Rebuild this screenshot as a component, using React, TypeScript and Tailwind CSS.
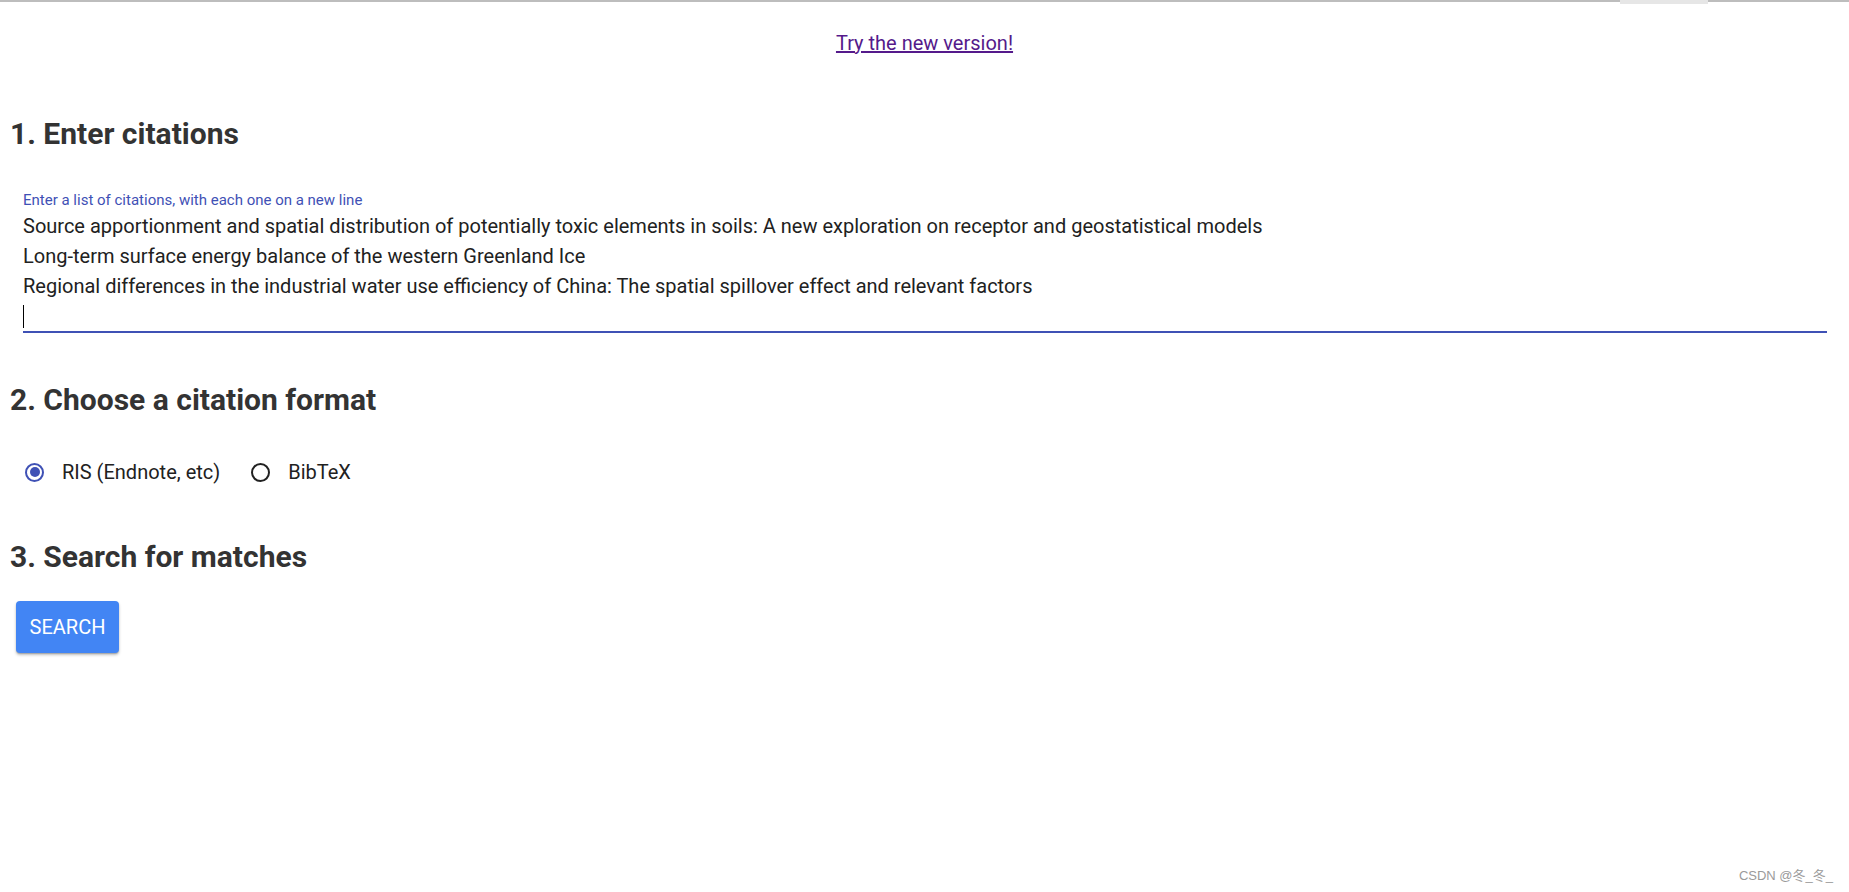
import { useState } from "react";

const citations = [
  "Source apportionment and spatial distribution of potentially toxic elements in soils: A new exploration on receptor and geostatistical models",
  "Long-term surface energy balance of the western Greenland Ice",
  "Regional differences in the industrial water use efficiency of China: The spatial spillover effect and relevant factors",
];

function Radio({ checked, label, onClick }: { checked: boolean; label: string; onClick: () => void }) {
  return (
    <button type="button" onClick={onClick} className="flex items-center gap-[18px] cursor-pointer">
      <span
        className={
          checked
            ? "flex h-[19px] w-[19px] items-center justify-center rounded-full border-[2px] border-[#3f51b5]"
            : "flex h-[19px] w-[19px] items-center justify-center rounded-full border-[2px] border-[#212121]"
        }>
        {checked && <span className="h-[10px] w-[10px] rounded-full bg-[#3f51b5]" />}
      </span>
      <span className="text-[20px] leading-[22px] text-[#212121]">{label}</span>
    </button>
  );
}

export default function App() {
  const [format, setFormat] = useState("ris");

  return (
    <div className="relative h-[892px] w-full overflow-hidden bg-white font-['Roboto',sans-serif]">
      <div className="relative h-[2px] w-full bg-[#bdbdbd]">
        <div className="absolute right-[141px] top-0 h-[4px] w-[88px] bg-[#e6e6e6]" />
      </div>

      <div className="pt-[30px] text-center text-[20px] leading-[22px]">
        <a href="#" className="text-[#551a8b] underline">
          Try the new version!
        </a>
      </div>

      <div className="pl-[10px] pr-[22px]">
        <h2 className="mt-[62px] text-[30px] font-bold leading-[36px] text-[#333]">1. Enter citations</h2>

        <div className="ml-[13px] mt-[39px]">
          <div className="text-[15px] leading-[18px] text-[#3f51b5]">
            Enter a list of citations, with each one on a new line
          </div>
          <div className="mt-[2px] border-b-[2px] border-[#3f51b5] text-[20px] leading-[30px] text-[#212121]">
            {citations.map((c) => (
              <div key={c}>{c}</div>
            ))}
            <div className="flex h-[30px] items-center">
              <span className="h-[23px] w-[1px] bg-black" />
            </div>
          </div>
        </div>

        <h2 className="mt-[49px] text-[30px] font-bold leading-[36px] text-[#333]">2. Choose a citation format</h2>

        <div className="ml-[15px] mt-[35px] flex h-[38px] items-center gap-[31px]">
          <Radio checked={format === "ris"} label="RIS (Endnote, etc)" onClick={() => setFormat("ris")} />
          <Radio checked={format === "bib"} label="BibTeX" onClick={() => setFormat("bib")} />
        </div>

        <h2 className="mt-[48px] text-[30px] font-bold leading-[36px] text-[#333]">3. Search for matches</h2>

        <button
          type="button"
          className="ml-[6px] mt-[26px] h-[52px] w-[103px] rounded-[4px] bg-[#4285f4] text-[20px] uppercase text-white shadow-[0_2px_3px_rgba(0,0,0,0.25),0_1px_1px_rgba(0,0,0,0.15)]">
          Search
        </button>
      </div>

      <div className="absolute bottom-[7px] right-[16px] font-['Liberation_Sans','Noto_Sans_CJK_SC',sans-serif] text-[13px] text-[#9a9a9a]">
        CSDN @冬_冬_
      </div>
    </div>
  );
}
